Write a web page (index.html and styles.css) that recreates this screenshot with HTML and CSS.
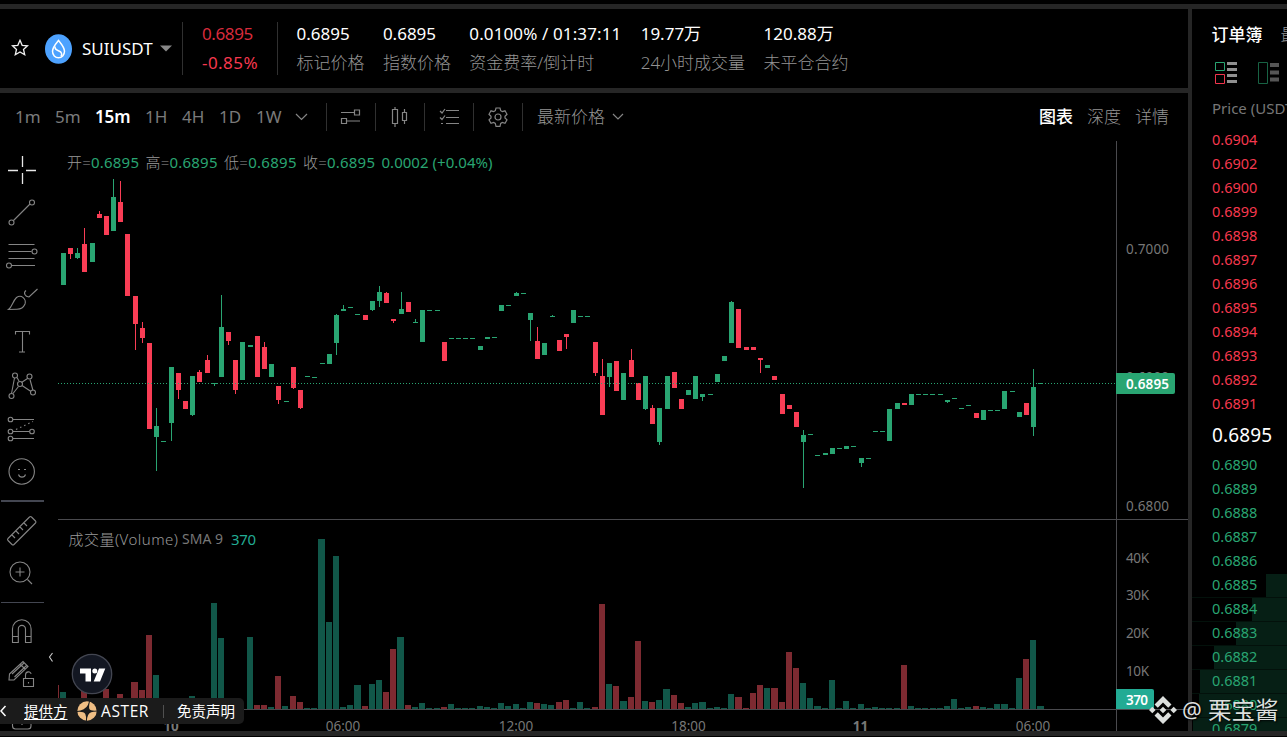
FILE: index.html
```html
<!DOCTYPE html>
<html lang="zh-CN">
<head>
<meta charset="utf-8">
<title>SUIUSDT</title>
<link rel="stylesheet" href="styles.css">
</head>
<body>
<div class="app">
  <main class="market">
    <header class="ticker">
      <svg class="star" width="18" height="18" viewBox="0 0 18 18"><path d="M9 1.3l2.2 5 5.3.5-4 3.6 1.2 5.3L9 12.9l-4.7 2.8 1.2-5.3-4-3.6 5.3-.5z" fill="none" stroke="#f2f2f2" stroke-width="1.3"/></svg>
      <svg class="coin" width="27" height="30" viewBox="0 0 27 30"><ellipse cx="13.5" cy="15" rx="13.5" ry="14.7" fill="#4da2ff"/><path d="M13.5 6.5c3.300 4 6 7 6 10.800a6 6.500 0 0 1-12 0c0-3.800 2.700-6.800 6-10.800z" fill="none" stroke="#fff" stroke-width="1.500"/><path d="M10 12.500c-.5 3 1.500 3.500 4 4.500s3.500 3 2 5.500" fill="none" stroke="#fff" stroke-width="1.500"/></svg>
      <span class="pair">SUIUSDT</span>
      <svg class="caret" width="12" height="7" viewBox="0 0 12 7"><path d="M0 .5h12L6 6.500z" fill="#888"/></svg>
      <div class="last"><span class="last-price">0.6895</span><span class="change">-0.85%</span></div>
      <dl class="stats">
        <div class="stat"><dd>0.6895</dd><dt>标记价格</dt></div>
        <div class="stat"><dd>0.6895</dd><dt>指数价格</dt></div>
        <div class="stat stat-funding"><dd>0.0100% / 01:37:11</dd><dt>资金费率/倒计时</dt></div>
        <div class="stat stat-volume"><dd>19.77万</dd><dt>24小时成交量</dt></div>
        <div class="stat"><dd>120.88万</dd><dt>未平仓合约</dt></div>
      </dl>
    </header>
    <nav class="toolbar">
      <span class="tf tf-1m">1m</span><span class="tf tf-5m">5m</span><span class="tf tf-15m">15m</span><span class="tf tf-1h">1H</span><span class="tf tf-4h">4H</span><span class="tf tf-1d">1D</span><span class="tf tf-1w">1W</span>
      <svg class="chev" width="13" height="8" viewBox="0 0 13 8"><path d="M1 1l5.500 5.500L12 1"/></svg>
      <span class="tool"><svg width="22" height="18" viewBox="0 0 22 18"><path d="M1 4.500h13M14.500 2h5v5h-5zM1.500 10.500h5v5h-5zM7 13h13"/></svg></span>
      <span class="tool"><svg width="22" height="20" viewBox="0 0 22 20"><path d="M3.500 2.500h5v14h-5zM6 0v2.500M6 16.500V20M13.500 5.500h4v8h-4zM15.500 2v3.500M15.500 13.500V17"/></svg></span>
      <span class="tool"><svg width="22" height="18" viewBox="0 0 22 18"><path d="M8 2.500h13M8 9.500h13M8 15.500h13M2 3l2 2 3-4M2 9.500l2 2 3-4M3 15.500h2"/></svg></span>
      <span class="tool"><svg width="20" height="20" viewBox="0 0 20 20"><path d="M8 1h4l.7 2.700 1.600.9 2.700-.8 2 3.500-2 1.900v1.700l2 1.900-2 3.500-2.700-.8-1.600.9L12 19.300H8l-.7-2.900-1.600-.9-2.700.8-2-3.500 2-1.900V9.200l-2-1.900 2-3.500 2.700.8 1.600-.9z"/><circle cx="10" cy="10" r="3"/></svg></span>
      <span class="tool price-kind"><span class="label">最新价格</span><svg width="12" height="8" viewBox="0 0 12 8"><path d="M1 1l5 5 5-5"/></svg></span>
      <div class="views"><b>图表</b><span>深度</span><span>详情</span></div>
    </nav>
    <section class="chart-row">
      <svg class="draw-tools" width="58" height="590" viewBox="0 141 58 590">
        <path class="cross" d="M22.500 156v11M22.500 173v11M8 170.500h10M26 170.500h10"/>
        <path d="M13.500 220.500L30 204"/><circle cx="11.500" cy="222.500" r="2.500"/><circle cx="32" cy="202.500" r="2.500"/>
        <path d="M8.500 244.500h26M8.500 251.500h23M8.500 258.500h26M12 265.500h23"/><circle cx="34.500" cy="251.500" r="2.500"/><circle cx="9" cy="265.500" r="2.500"/>
        <path d="M8.500 309.500c4-3 4-8 8-12 5-3.500 10 1.500 8.500 6.500-1.500 3.500-4 5.200-8 5.300zM26 290.500c-3 2.500-1 6 3 6.500l8.500-8"/>
        <path d="M15.500 334.500v-3h14v3M22.500 331.500v20M19 352h6"/>
        <path d="M14.500 378l-3 15.500M17 377.500l2 3.500M21.500 382.500l6-4M30 379.500l3 11M22 385.500l9 6M13 393.500l5.500-7"/><circle cx="15" cy="375.500" r="2.500"/><circle cx="29.500" cy="376.500" r="2.500"/><circle cx="20" cy="384" r="2.500"/><circle cx="11.500" cy="396" r="2.500"/><circle cx="33" cy="392.500" r="2.500"/>
        <path d="M13 419.500h21M13 431.500h16.500M13 438.500h21"/><path class="dots" d="M16 429.500l17-8"/><circle cx="10.500" cy="419.500" r="2.300"/><circle cx="10.500" cy="431.500" r="2.300"/><circle cx="32" cy="431.500" r="2.300"/><circle cx="10.500" cy="438.500" r="2.300"/>
        <circle cx="21.700" cy="471.500" r="12.700"/><path d="M18.500 474.500c1 3.500 6 3.500 7 0M18 469.500h2M24 469.500h2"/>
        <path class="split" d="M1 501h43"/>
        <path d="M8 538.500L29.500 517q1-1 2 0l4 4q1 1 0 2L14 544.500q-1 1-2 0l-4-4q-1-1 0-2zM12 535l3 3M16 531l3 3M20 527l3 3M24 523l3 3"/>
        <circle cx="20" cy="572" r="10"/><path d="M15.500 572h9M20 567.500v9M27.500 579.500l4.500 4.500"/>
        <path class="split thin" d="M1 602.500h43"/>
        <path d="M12.500 642.500V629a9.300 9.300 0 0 1 18.600 0v13.500h-5.600V629a3.600 3.600 0 0 0-7.200 0v13.500zM12.500 636.500h6M25.500 636.500h6"/>
        <path d="M9.500 674L23 661.500l5 5L14 680H9zM12 674l12-11M14.500 677L27 665M20 664l5 5M23.500 678.500h10v8h-10zM25.500 678v-3c0-4 5.500-4 5.500-1M28.500 682v1.500"/>
        <path d="M12.500 712v14q0 3 3 3H28q3 0 3-3v-14M22 722v3"/>
        <path class="collapse" d="M52.500 653l-3 4 3 4.500"/>
      </svg>
      <svg id="chart" class="chart" width="1130" height="590" viewBox="58 141 1130 590">
        <g id="plot" shape-rendering="crispEdges"></g>
        <g shape-rendering="crispEdges">
          <path class="quote-line" d="M58 383.500h1058"/>
          <path class="axis" d="M58 519.500h1130M58 709.500h1130M1116.500 141v590"/>
        </g>
        <text class="tick" x="1126" y="254" textLength="43">0.7000</text>
        <text class="tick" x="1126" y="382" textLength="43">0.6900</text>
        <text class="tick" x="1126" y="511" textLength="43">0.6800</text>
        <text class="tick" x="1126" y="563" textLength="23">40K</text>
        <text class="tick" x="1126" y="600" textLength="23">30K</text>
        <text class="tick" x="1126" y="638" textLength="23">20K</text>
        <text class="tick" x="1126" y="676" textLength="23">10K</text>
        <path d="M1116 373h57q2 0 2 2v17q0 2-2 2h-57z" fill="#29a572"/>
        <text class="flag" x="1126" y="389" textLength="43">0.6895</text>
        <path d="M1116 689h36q2 0 2 2v18h-38z" fill="#22ab94"/>
        <text class="flag" x="1126" y="705" textLength="22">370</text>
        <text class="tick time day" x="171" y="731">10</text>
        <text class="tick time" x="343" y="731">06:00</text>
        <text class="tick time" x="516" y="731">12:00</text>
        <text class="tick time" x="688.500" y="731">18:00</text>
        <text class="tick time day" x="860.500" y="731">11</text>
        <text class="tick time" x="1033" y="731">06:00</text>
        <g class="legend">
          <text x="67" y="168" textLength="72">开=<tspan>0.6895</tspan></text>
          <text x="145.500" y="168" textLength="72">高=<tspan>0.6895</tspan></text>
          <text x="224" y="168" textLength="72.500">低=<tspan>0.6895</tspan></text>
          <text x="303" y="168" textLength="72">收=<tspan>0.6895</tspan></text>
          <text x="381.500" y="168" textLength="111"><tspan>0.0002 (+0.04%)</tspan></text>
          <text x="68.500" y="545" textLength="109.500">成交量(Volume)</text>
          <text x="182" y="544" textLength="41" class="sma">SMA 9</text>
          <text x="231" y="545" textLength="25"><tspan class="teal">370</tspan></text>
        </g>
        <circle cx="92" cy="674" r="19.700" fill="#131722" stroke="#434651" stroke-width="1.300"/>
        <path d="M80 668.500h11v13h-5.500v-8H80zM99 668.500h6.300l-5.300 13h-6.300z" fill="#fff"/><circle cx="94.800" cy="671" r="2.500" fill="#fff"/>
      </svg>
    </section>
  </main>
  <aside class="book">
    <div class="book-tabs"><b>订单簿</b><span>最新成交</span></div>
    <div class="book-modes">
      <svg width="24" height="24" viewBox="0 0 24 24"><path d="M1.500 1.500h9v8h-9z" fill="none" stroke="#29a572"/><path d="M1.500 13.500h9v9h-9z" fill="none" stroke="#f0354c"/><path d="M13 2.500h10M13 8.500h10M13 14.500h10M13 20.500h10" stroke="#909090" stroke-width="3"/></svg>
      <svg class="dim" width="24" height="24" viewBox="0 0 24 24"><path d="M1.500 1.500h9v21h-9z" fill="none" stroke="#29a572"/><path d="M13 4h9M13 11.500h9M13 18.500h9" stroke="#909090" stroke-width="4"/></svg>
    </div>
    <div class="book-head">Price (USDT)</div>
    <ol class="asks">
      <li>0.6904</li><li>0.6902</li><li>0.6900</li><li>0.6899</li><li>0.6898</li><li>0.6897</li><li>0.6896</li><li>0.6895</li><li>0.6894</li><li>0.6893</li><li>0.6892</li><li>0.6891</li>
    </ol>
    <div class="book-last">0.6895</div>
    <ol class="bids">
      <li>0.6890</li><li>0.6889</li><li>0.6888</li><li>0.6887</li><li>0.6886</li>
      <li style="--depth:21px">0.6885</li><li style="--depth:35px">0.6884</li><li style="--depth:51px">0.6883</li><li style="--depth:73px">0.6882</li><li style="--depth:87px">0.6881</li><li style="--depth:88px">0.6880</li><li style="--depth:94px">0.6879</li>
    </ol>
  </aside>
</div>
<div class="provider">
  <svg width="8" height="14" viewBox="0 0 8 14"><path d="M5.500 2L1 7l4.500 5" fill="none" stroke="#fff" stroke-width="1.500"/></svg>
  <u>提供方</u>
  <svg class="aster-logo" width="20" height="20" viewBox="0 0 20 20"><circle cx="10" cy="10" r="9.700" fill="#efbe84"/><path d="M12.200 0Q10.500 8 3.500 9.500L0 10v.9q7-.5 8.300 2.200 1 2 .7 6.900h.9q.3-7.500 4.300-8.700 2-.7 5.800-.8v-.9q-6.500.6-7.600-1.600Q11.500 6 13 .3z" fill="#1b1b1b"/></svg>
  <span class="aster">ASTER</span><i></i><span>免责声明</span>
</div>
<div class="signature">
  <svg width="28" height="28" viewBox="0 0 28 28"><path d="M14 0l8.500 8.500-3.300 3.300L14 6.600l-5.200 5.200-3.300-3.300zM14 28l8.500-8.500-3.300-3.300-5.200 5.200-5.200-5.200-3.300 3.300zM3.300 10.700L6.600 14l-3.300 3.300L0 14zM24.700 10.700L28 14l-3.300 3.300-3.300-3.300zM14 10.700l3.300 3.300-3.300 3.300-3.300-3.300z" fill="#dcdfdd"/></svg>
  <span class="at">@</span><span>栗宝酱</span>
</div>
<script src="chart.js"></script>
</body>
</html>
```
FILE: styles.css
```css
* { box-sizing: border-box; }
body { margin: 0; width: 1287px; height: 737px; overflow: hidden; background: #000; color: #fff; font-family: "Noto Sans", "Noto Sans CJK SC", sans-serif; font-size: 17px; }
.app { display: flex; height: 736px; padding-top: 4px; border-bottom: 5px solid #262626; }
.market { width: 1188px; flex: none; border-top: 5px solid #262626; }
.ticker { height: 84px; display: flex; align-items: center; padding-left: 11px; border-bottom: 5px solid #262626; }
.star { margin-top: -1px; }
.coin { margin-left: 16px; }
.pair { width: 72px; margin-left: 10px; letter-spacing: 0; white-space: nowrap; }
.caret { margin-left: 6px; }
.last { width: 96px; height: 53px; margin-left: 10px; padding: 0 0 2px 19px; border: solid #303030; border-width: 0 1px; display: grid; grid-template-rows: 29px 29px; align-content: center; line-height: 29px; color: #f6384e; }
.last-price { color: #d82b3c; letter-spacing: -.4px; }
.change { letter-spacing: .45px; }
.stats { display: flex; margin: 0 0 0 18.5px; padding-bottom: 2px; line-height: 29px; white-space: nowrap; }
.stat { width: 86.4px; }
.stat dd { margin: 0; }
.stat dt { color: #939393; font-weight: 300; }
.stat-funding { width: 171.4px; }
.stat-funding dd { letter-spacing: .12px; }
.stat-volume { width: 122.8px; }
.toolbar { display: flex; height: 48px; align-items: center; padding-left: 15px; color: #7a7a7a; font-weight: 300; }
.tf { white-space: nowrap; font-weight: 400; padding-bottom: 2px; }
.tf-1m, .tf-5m { width: 40px; }
.tf-15m { width: 50px; color: #fff; font-weight: 600; letter-spacing: -.1px; }
.tf-1h, .tf-4h { width: 37px; }
.tf-1d { width: 37px; }
.tf-1w { width: 29px; }
.toolbar svg { fill: none; stroke: #858585; stroke-width: 1.2; }
.chev { margin-left: 10px; margin-right: 18px; }
.tool { display: flex; align-items: center; justify-content: center; width: 49px; height: 28px; border-left: 1px solid #303030; }
.price-kind { width: 104px; justify-content: flex-start; padding-left: 14px; white-space: nowrap; color: #939393; }
.label { padding-bottom: 3px; }
.price-kind svg { flex: none; margin-left: 7px; }
.views { display: flex; gap: 14px; margin-left: auto; padding: 0 19px 3px 0; color: #939393; }
.views b { color: #fff; font-weight: 500; }
.chart-row { display: flex; }
.draw-tools { fill: none; stroke: #858585; stroke-width: 1.1; }
.draw-tools .cross { stroke: #e8e8e8; stroke-width: 1.3; }
.draw-tools .dots { stroke-dasharray: 1.5 3; }
.draw-tools .split { stroke: #434651; stroke-width: 2; }
.draw-tools .thin { stroke-width: 1; }
.draw-tools .collapse { stroke: #ccc; }
.chart .axis { fill: none; stroke: #4a4a4e; }
.chart .quote-line { stroke: #29a572; stroke-dasharray: 1 2; }
.up { fill: #29a572; }
.down { fill: #f93d55; }
.vol-up { fill: #115749; }
.vol-down { fill: #7d2a31; }
.tick { fill: #777; font-size: 13.5px; }
.time { text-anchor: middle; font-size: 13.5px; }
.day { font-weight: 700; }
.flag { fill: #fff; font-size: 13.5px; font-weight: 600; }
.legend { fill: #999; font-size: 15px; font-weight: 300; }
.legend tspan { fill: #29a572; font-weight: 400; }
.legend .teal { fill: #22ab94; }
.legend .sma { fill: #777; font-size: 14px; font-weight: 400; }
.book { flex: 1; min-width: 0; overflow: hidden; border-left: 4px solid #262626; border-top: 5px solid #262626; white-space: nowrap; }
.book-tabs { display: flex; gap: 18px; height: 50px; padding: 13px 0 0 19.5px; line-height: 25px; }
.book-tabs b { font-weight: 500; }
.book-tabs span { color: #939393; font-weight: 300; }
.book-modes { display: flex; gap: 19px; padding: 2px 0 0 22px; height: 34px; }
.book-modes svg { flex: none; }
.dim { opacity: .6; }
.book-head { height: 35px; padding-left: 20px; line-height: 30px; font-size: 15px; color: #777; }
.asks, .bids { list-style: none; margin: 0; padding: 0; font-size: 14.5px; line-height: 22px; color: #f6384e; }
.asks li, .bids li { height: 24px; padding-left: 20px; }
.bids { color: #29a572; padding-top: 1px; line-height: 20px; }
.bids li { border-bottom: 1px solid #03110b; background: linear-gradient(#061f15, #061f15) right / var(--depth, 0px) 100% no-repeat; }
.bids li:not([style]) { border-color: transparent; }
.book-last { height: 37px; padding-left: 20px; line-height: 38px; font-size: 19px; letter-spacing: .15px; }
.provider { position: absolute; left: 0; top: 698px; width: 244px; height: 26px; display: flex; align-items: center; background: #1b1b1b; border-radius: 0 5px 5px 0; font-size: 14.5px; line-height: 24px; white-space: nowrap; }
.provider u { width: 44px; margin-left: 16px; padding-bottom: 1px; text-underline-offset: 2px; }
.provider span { padding-bottom: 1px; }
.aster-logo { margin-left: 9px; }
.provider .aster { width: 48px; margin-left: 4px; font-family: "Open Sans", "Noto Sans", sans-serif; font-size: 15.5px; letter-spacing: .6px; }
.provider i { width: 1px; height: 13px; margin: 0 13px 0 14px; background: #505050; }
.signature { position: absolute; left: 1149px; top: 690px; height: 40px; display: flex; align-items: center; color: #dcdfdd; font-size: 23.5px; white-space: nowrap; text-shadow: 1px 1px 2px #000; }
.signature span { padding-bottom: 2px; }
.signature .at { width: 26px; margin-left: 5px; font-size: 22px; }
```
FILE: chart.js
```js
// Candles: left edge, direction, body top, body bottom, wick top, wick bottom
const candles = `61 g 253 285;68 r 248 254 248 259;75 g 253 258 248 259;82 r 244 272 228 272;90 g 243 262;97 r 214 218 211 218;104 r 216 235;111 g 197 231 179 231;118 r 202 222 181 222;125 r 234 296;133 r 296 324 296 350;140 r 328 338 322 343;147 r 343 429;154 g 426 437 408 471;161 g 441 442;169 g 367 423 367 441;176 r 373 390 373 399;183 r 401 409;190 g 376 415 376 416;197 r 372 382 370 382;205 r 360 373 355 373;212 g 383 384 383 386;219 g 327 377 295 377;226 r 332 341 332 345;233 r 360 390 360 394;240 g 342 380;248 g 345 347;255 r 336 377;262 r 347 369 342 369;269 g 364 377;276 r 386 400 386 404;284 g 401 402;291 r 367 388 367 389;298 r 390 408 390 409;305 g 376 377;312 g 377 378;320 g 363 364;327 g 354 364;334 g 315 343 314 355;341 g 309 311 305 311;348 g 307 308;355 g 314 315;363 r 315 320;370 g 301 310 301 311;377 g 292 301 286 307;384 r 293 303 292 303;391 r 319 321 319 323;399 g 309 314 292 314;406 r 302 312;413 g 322 323 319 323;420 g 310 342;427 g 310 311;435 g 310 311;442 r 342 361;449 g 338 339;456 g 338 339;463 g 338 339;470 g 338 339;478 g 346 350;485 g 337 339;492 g 337 338;499 g 305 311;506 g 305 306;514 g 293 296 292 296;521 g 293 294;528 g 313 320 313 341;535 r 341 359 327 359;542 g 343 355;550 g 316 317 315 317;557 r 340 351;564 r 334 337 334 349;571 g 310 323;578 g 316 317;585 g 316 317;593 r 342 373 342 376;600 r 376 415 359 415;607 g 363 377 363 387;614 r 361 391;621 g 373 400;629 r 360 377 349 377;636 r 383 400;643 g 376 409 376 410;650 r 408 424 405 424;657 g 408 442 408 445;665 g 376 409;672 r 372 388;679 r 399 409;686 g 390 395;693 g 376 399;700 g 394 397 394 401;708 g 394 395;715 g 374 382;722 g 356 361;729 g 302 343 301 343;736 r 309 348;744 r 347 350;751 r 347 350;758 r 358 360 358 373;765 g 365 368;772 r 376 380;780 r 394 414;787 r 405 409;794 r 412 427;801 g 435 442 430 488;808 g 434 435;815 g 455 456;823 g 453 455;830 g 448 454;837 g 448 449;844 g 446 449;851 g 446 447;859 g 458 463 458 467;866 g 458 459;873 g 431 432;880 g 431 432;887 g 409 441;895 g 403 409;902 r 403 405;909 g 394 405;916 g 394 395;923 g 394 395;930 g 394 395;938 g 394 395;945 g 400 402 400 403;952 g 398 399;959 g 408 409;966 g 405 406;974 r 413 418;981 g 410 420;988 g 410 411;995 g 410 411;1002 g 391 409;1010 g 391 392;1017 g 412 417;1024 r 403 415;1031 g 387 427 369 436;1038 g 383 384`;

// Volume: left edge, direction, top
const volumes = `53 r 685;60 g 692;81 r 691;103 r 689;117 r 694;131 r 682;139 r 690;146 r 635;153 g 675;189 g 696;211 g 603;218 g 638;247 g 637;254 r 705;261 r 705;268 g 707;275 r 676;282 g 706;290 r 696;297 r 702;304 g 708;311 g 708;318 g 539;326 g 622;333 g 556;340 g 707;347 g 705;354 g 685;362 r 706;369 g 684;376 g 680;383 r 692;390 r 649;397 g 637;405 r 705;412 g 707;419 g 703;426 g 708;434 g 708;441 r 707;448 g 704;455 g 708;462 g 708;469 g 708;477 g 706;484 g 707;491 g 708;498 g 703;505 g 706;513 g 704;520 g 708;527 g 702;534 r 703;541 g 704;548 g 705;556 r 702;563 r 700;570 g 708;577 g 702;584 g 708;592 r 707;599 r 604;606 g 684;613 r 686;620 g 701;628 r 697;635 r 641;642 g 701;649 r 702;656 g 700;663 g 689;671 r 695;678 r 703;685 g 707;692 g 703;699 g 702;707 g 708;714 g 707;721 g 708;728 g 694;735 r 697;743 r 708;750 r 693;757 r 685;764 g 688;771 r 688;779 r 702;786 r 652;793 r 668;800 g 683;807 g 698;814 g 706;822 g 708;829 g 680;836 g 708;843 g 701;850 g 708;858 g 704;865 g 708;872 g 707;879 g 708;886 g 708;894 g 708;901 r 665;908 g 706;915 g 708;922 g 708;930 g 708;937 g 708;944 g 706;951 g 699;958 g 708;965 g 707;973 r 706;980 g 707;987 g 708;994 g 704;1001 g 704;1009 g 708;1016 g 678;1023 r 659;1030 g 640;1037 g 706`;

const wide = new Set([131, 318, 354, 397, 620, 663, 699, 735, 771, 814, 1001, 1037]);
const plot = document.getElementById('plot');

function rect(x, y, w, h, cls) {
  const r = document.createElementNS('http://www.w3.org/2000/svg', 'rect');
  r.setAttribute('x', x);
  r.setAttribute('y', y);
  r.setAttribute('width', w);
  r.setAttribute('height', h);
  r.setAttribute('class', cls);
  plot.appendChild(r);
}

for (const row of volumes.split(';')) {
  const [x, dir, top] = row.split(' ');
  rect(+x, +top, wide.has(+x) ? 7 : 6, 709 - top, dir === 'g' ? 'vol-up' : 'vol-down');
}
for (const row of candles.split(';')) {
  const [x, dir, top, bottom, high, low] = row.split(' ');
  const cls = dir === 'g' ? 'up' : 'down';
  rect(+x, +top, 5, bottom - top, cls);
  if (high) rect(+x + 2, +high, 1, low - high, cls);
}
```
